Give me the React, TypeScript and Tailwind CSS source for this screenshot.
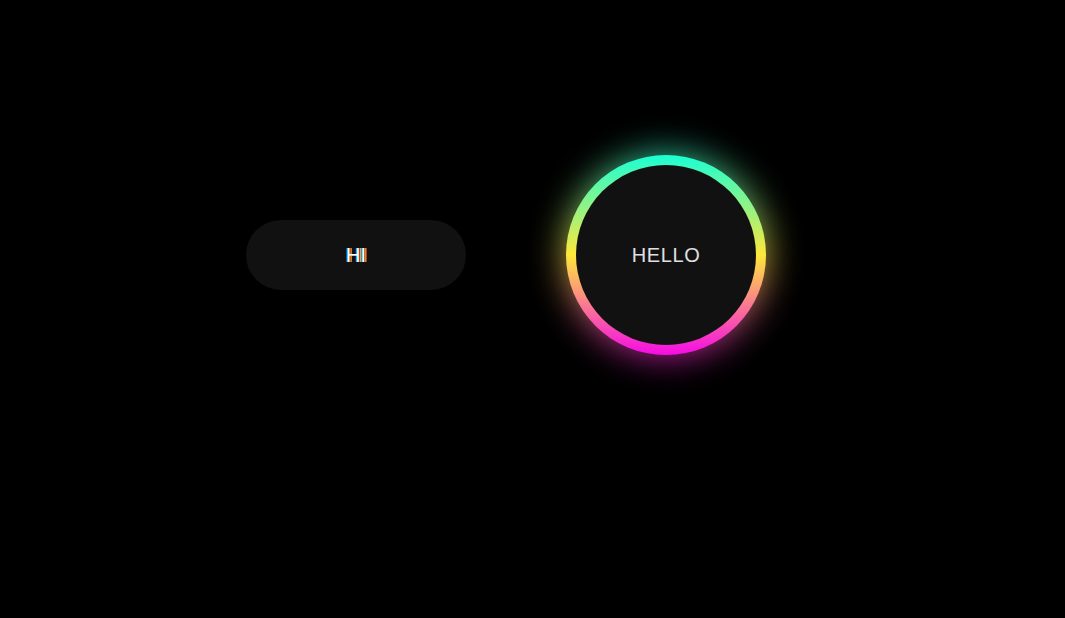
export default function App() {
  return (
    <div className="min-h-[618px] w-full bg-black font-['Liberation_Sans',Arial,sans-serif]">
      <div className="flex items-center gap-[100px] pl-[246px] pt-[155px]">
        <button className="flex h-[70px] w-[220px] items-center justify-center rounded-full bg-[#111111] text-[20px] text-white [text-shadow:-1px_0_#0fb4e6,1px_0_#a3161a,2px_0_#f7c23a]">
          HI
        </button>
        <div className="relative h-[200px] w-[200px]">
          <div className="absolute inset-0 rounded-full bg-[linear-gradient(to_bottom,#1fffd8,#ffe53b,#f50ce6)] opacity-80 blur-[18px]" />
          <div className="relative flex h-full w-full items-center justify-center rounded-full bg-[linear-gradient(to_bottom,#1affd5,#ffe83b,#f50ce6)] p-[10px]">
            <div className="flex h-full w-full items-center justify-center rounded-full bg-[#111111] text-[20px] tracking-[0.6px] text-[#e0e0e0]">
              HELLO
            </div>
          </div>
        </div>
      </div>
    </div>
  );
}
